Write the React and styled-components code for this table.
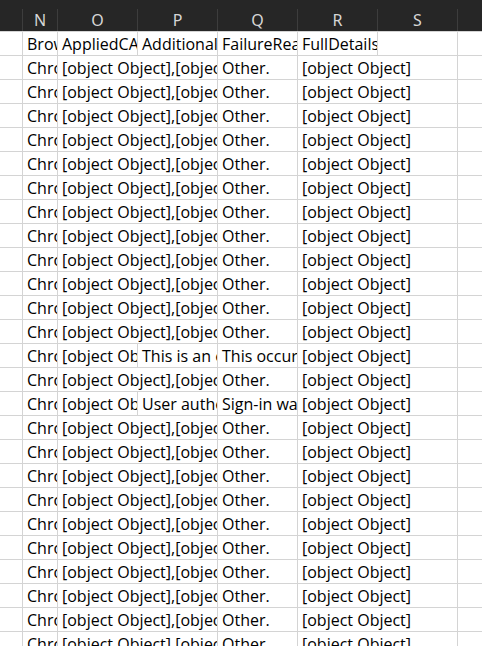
import styled, { createGlobalStyle } from "styled-components";

const GlobalStyle = createGlobalStyle`
  html, body {
    margin: 0;
    padding: 0;
    background: #ffffff;
    overflow: hidden;
  }
`;

const COLS = "23px 35px 80px 80px 80px 80px 80px 1fr";

const Sheet = styled.div`
  width: 482px;
  height: 646px;
  overflow: hidden;
  background: #ffffff;
`;

const HeaderBar = styled.div`
  display: grid;
  grid-template-columns: ${COLS};
  height: 32px;
  padding-top: 9px;
  box-sizing: border-box;
  background: #262626;
  border-bottom: 1px solid #d4d4d4;
`;

const ColLabel = styled.div`
  border-right: 1px solid #3d3d3d;
  color: #d6d6d6;
  font-family: "Noto Sans", "Open Sans", sans-serif;
  font-size: 16px;
  line-height: 22px;
  text-align: center;
  &:last-child {
    border-right: none;
  }
`;

const Row = styled.div`
  display: grid;
  grid-template-columns: ${COLS};
  height: 24px;
  box-sizing: border-box;
  border-bottom: 1px solid #d4d4d4;
`;

const Cell = styled.div`
  grid-column: span ${({ $span }) => $span || 1};
  border-right: 1px solid #d4d4d4;
  padding: 1px 0 0 4px;
  overflow: hidden;
  white-space: nowrap;
  color: #000000;
  font-family: "Open Sans", "Liberation Sans", sans-serif;
  font-size: 16px;
  line-height: 22px;
  &:last-child {
    border-right: none;
  }
`;

const letters = ["", "N", "O", "P", "Q", "R", "S", ""];

const headerRow = {
  n: "Browser",
  o: "AppliedCAPolicies",
  p: "AdditionalDetails",
  q: "FailureReason",
  r: "FullDetails",
  fits: true,
};

const other = {
  n: "Chrome 120.0.0",
  o: "[object Object],[object Object],[object Object]",
  q: "Other.",
  r: "[object Object]",
};

const rows = [
  headerRow,
  ...Array(12).fill(other),
  {
    n: "Chrome 120.0.0",
    o: "[object Object]",
    p: "This is an expected part of the device authentication flow.",
    q: "This occurred due to 'Keep me signed in' interrupt.",
    r: "[object Object]",
  },
  other,
  {
    n: "Chrome 120.0.0",
    o: "[object Object]",
    p: "User authenticated with password.",
    q: "Sign-in was interrupted.",
    r: "[object Object]",
  },
  ...Array(10).fill(other),
];

// empty neighbours let text run on (and hide the gridline), like Excel
const SheetRow = ({ data }) => {
  const oSpan = data.p ? 1 : 2;
  return (
    <Row>
      <Cell />
      <Cell>{data.n}</Cell>
      <Cell $span={oSpan}>{data.o}</Cell>
      {data.p && <Cell>{data.p}</Cell>}
      <Cell>{data.q}</Cell>
      {data.fits ? (
        <>
          <Cell>{data.r}</Cell>
          <Cell />
        </>
      ) : (
        <Cell $span={2}>{data.r}</Cell>
      )}
      <Cell />
    </Row>
  );
};

export default function App() {
  return (
    <Sheet>
      <GlobalStyle />
      <HeaderBar>
        {letters.map((l, i) => (
          <ColLabel key={i}>{l}</ColLabel>
        ))}
      </HeaderBar>
      {rows.map((r, i) => (
        <SheetRow key={i} data={r} />
      ))}
    </Sheet>
  );
}
